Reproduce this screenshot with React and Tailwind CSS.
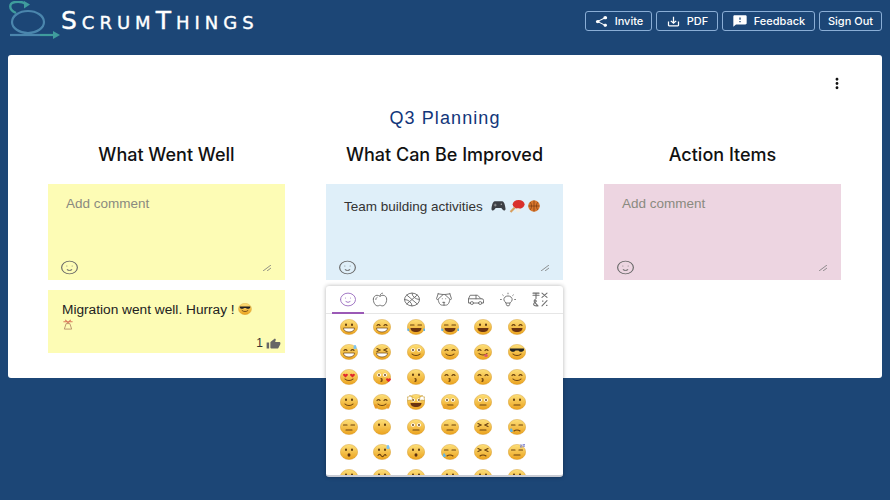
import React from 'react';
import { MdShare, MdSaveAlt, MdFeedback, MdMoreVert, MdThumbUp } from 'react-icons/md';
import { TbMoodSmile, TbApple, TbBallBasketball, TbDog, TbCar, TbBulb } from 'react-icons/tb';

const FONT = "font-['Liberation_Sans',Arial,sans-serif]";

const HEADER_BUTTONS = [
  { label: 'Invite', icon: <MdShare className="w-[15px] h-[13px]" preserveAspectRatio="none" />, width: 'w-[67px]' },
  { label: 'PDF', icon: <MdSaveAlt className="w-[15px] h-[13px]" preserveAspectRatio="none" />, width: 'w-[62px]' },
  { label: 'Feedback', icon: <MdFeedback className="w-[16px] h-[14px]" preserveAspectRatio="none" />, width: 'w-[93px]' },
  { label: 'Sign Out', icon: null, width: 'w-[63px]' },
];

function Symbols(props) {
  return (
    <svg viewBox="0 0 20 16" fill="none" stroke="currentColor" {...props}>
      <path d="M3 2h6M6 2v5M3 4h6M12 2l5 4M17 2l-5 4M7 14c-3 0-4-1-3-2.500s3-1 2-2.500-3 0-1 2l3 3M12 14l5-5M12.500 9.500h.5M16.500 13.500h.5" strokeWidth="1.100" strokeLinecap="round" />
    </svg>
  );
}

const TABS = [TbMoodSmile, TbApple, TbBallBasketball, TbDog, TbCar, TbBulb, Symbols];

// eyes: d dot, s smile arc, h heart, c closed line, g shades, w wide, x squint
// mouth: g grin, s smile, o small o, f flat, k kiss, t tongue, w wavy, d frown, b big open
const EMOJIS = [
  ['d', 'g'], ['s', 'g'], ['c', 'b', 'tears'], ['c', 'b', 'tears'], ['d', 'b'], ['s', 'b'],
  ['s', 'g', 'sweat'], ['x', 'g'], ['w', 's'], ['s', 's'], ['s', 't'], ['g', 's'],
  ['h', 's'], ['w', 'k', 'heart'], ['d', 'k'], ['s', 'k'], ['s', 'k'], ['s', 's'],
  ['d', 's'], ['s', 's', 'hands'], ['w', 'b', 'star'], ['w', 'f', 'hand'], ['w', 'f'], ['d', 'f'],
  ['c', 'f'], ['d', 'none'], ['w', 'f'], ['c', 'f'], ['x', 'f'], ['c', 'd', 'tear'],
  ['d', 'o'], ['d', 'w', 'sweat'], ['d', 'o'], ['c', 'd', 'tear'], ['x', 'd'], ['c', 'f', 'zzz'],
];

function Eyes({ kind }) {
  const line = { fill: 'none', stroke: '#6b4210', strokeWidth: 1.2, strokeLinecap: 'round' };
  if (kind === 'h') {
    return <path d="M3 5.5c.6-1 2-1 2.5 0 .5-1 2-1 2.4 0 .3 1-1.400 2.200-2.400 3-1-.8-2.800-2-2.500-3zM10 5.500c.6-1 2-1 2.500 0 .5-1 2-1 2.400 0 .3 1-1.400 2.200-2.400 3-1-.8-2.800-2-2.500-3z" fill="#e0282e" />;
  }
  if (kind === 'g') {
    return <path d="M2 4.500h14v1.500c-.5 2-4.500 2.500-5.500.5h-3c-1 2-5 1.500-5.500-.5z" fill="#222" />;
  }
  if (kind === 's') return <path d="M4 6.500c.8-1.300 2.400-1.300 3 0M11 6.500c.8-1.300 2.400-1.300 3 0" {...line} />;
  if (kind === 'c') return <path d="M3.500 6h3.500M11 6h3.500" {...line} />;
  if (kind === 'x') return <path d="M4 4.500l3 1.500-3 1.500M14 4.500l-3 1.500 3 1.500" {...line} />;
  if (kind === 'w') {
    return (
      <>
        <ellipse cx="6" cy="6" rx="2" ry="1.700" fill="#fff" />
        <ellipse cx="12" cy="6" rx="2" ry="1.700" fill="#fff" />
        <circle cx="6" cy="6" r=".9" fill="#5b3810" />
        <circle cx="12" cy="6" r=".9" fill="#5b3810" />
      </>
    );
  }
  return (
    <>
      <ellipse cx="6" cy="5.800" rx="1" ry="1.300" fill="#5b3810" />
      <ellipse cx="12" cy="5.800" rx="1" ry="1.300" fill="#5b3810" />
    </>
  );
}

function Mouth({ kind }) {
  const line = { fill: 'none', stroke: '#6b4210', strokeWidth: 1.1, strokeLinecap: 'round' };
  if (kind === 'g') return <path d="M3.500 9h11c0 2.600-2.400 4-5.500 4s-5.500-1.400-5.500-4z" fill="#fff" stroke="#6b4210" strokeWidth=".7" />;
  if (kind === 'b') return <path d="M3.500 9h11c0 2.600-2.400 4-5.500 4s-5.500-1.400-5.500-4z" fill="#6b3410" />;
  if (kind === 's') return <path d="M5 10c1.800 2 6.200 2 8 0" {...line} />;
  if (kind === 'f') return <path d="M6 11h6" {...line} />;
  if (kind === 'o') return <ellipse cx="9" cy="11" rx="1.500" ry="1.700" fill="#5b3010" />;
  if (kind === 'k') return <path d="M8 9.500c1.500.5 1.500 1 .5 1.500 1 .5 1 1-.5 1.500" {...line} />;
  if (kind === 't') return <><path d="M5 9.500c1.800 2 6.200 2 8 0" {...line} /><ellipse cx="12" cy="11.500" rx="1.800" ry="1.500" fill="#e05a6a" /></>;
  if (kind === 'w') return <path d="M5 11.500c1-1.500 2-1.500 3 0s2 1.500 3 0 1.500-1 2 0" {...line} />;
  if (kind === 'd') return <path d="M6 12c1.500-1.300 4.500-1.300 6 0" {...line} />;
  return null;
}

function Extra({ kind }) {
  if (kind === 'tears') return <path d="M1 9c-1 1.500-1 3 .5 3S2.500 10.500 1 9zM17 9c-1 1.500-1 3 .5 3s1-1.500-.5-3z" fill="#5fb4ea" />;
  if (kind === 'sweat') return <path d="M14.500 1c-1.500 2-1.500 4 .5 4s2-2 .5-4z" fill="#7cc3ef" />;
  if (kind === 'tear') return <path d="M3 9c-1.500 2-1.500 4 .5 4s1.500-2-.5-4z" fill="#5fb4ea" />;
  if (kind === 'heart') return <path d="M13 10c.6-1 2-1 2.500 0 .5-1 2-1 2.400 0 .3 1-1.400 2.200-2.400 3-1-.8-2.800-2-2.500-3z" fill="#e0282e" />;
  if (kind === 'hands') return <path d="M1 11c1-1 3-1 4 1l-1 2.500H2zM17 11c-1-1-3-1-4 1l1 2.500h2z" fill="#e89a28" />;
  if (kind === 'star') return <path d="M3 1l1 2h2l-1 2 1 2-3-1-3 1 1-2-1-2h2zM15 1l1 2h2l-1 2 1 2-3-1-3 1 1-2-1-2h2z" fill="#fff" stroke="#b8860b" strokeWidth=".5" />;
  if (kind === 'hand') return <path d="M2 11c1-1 4-1 5 1s-1 3-3 3-3-2-2-4z" fill="#eaa52d" />;
  if (kind === 'zzz') return <path d="M12 1h2.500l-2.500 2h2.500M15 .5h2l-2 1.800h2" fill="none" stroke="#7a7fd0" strokeWidth=".8" />;
  return null;
}

function Emoji({ eyes, mouth, extra, className = 'w-[18px] h-[16px]' }) {
  return (
    <svg viewBox="0 0 18 16" className={className} aria-hidden="true">
      <defs>
        <linearGradient id="face" x1="0" y1="0" x2="0" y2="1">
          <stop offset="0" stopColor="#fde07a" />
          <stop offset="1" stopColor="#eba21e" />
        </linearGradient>
      </defs>
      <ellipse cx="9" cy="8" rx="8.700" ry="7.600" fill="url(#face)" stroke="#d08f1c" strokeWidth=".4" />
      <Eyes kind={eyes} />
      <Mouth kind={mouth} />
      <Extra kind={extra} />
    </svg>
  );
}

function Logo() {
  return (
    <svg viewBox="0 0 52 38" className="w-[52px] h-[38px] shrink-0" fill="none" aria-hidden="true">
      <path d="M7 12C-1 8 0 2 6 1c4-.6 8 0 11 2" stroke="#3f9c9d" strokeWidth="2.400" />
      <path d="M15 0l6 3.500-6 4z" fill="#3f9c9d" />
      <ellipse cx="19" cy="21" rx="16" ry="11" stroke="#4b86ad" strokeWidth="2.200" />
      <path d="M1 34h30" stroke="#4b86ad" strokeWidth="2.200" />
      <path d="M31 34h13" stroke="#3f9c9d" strokeWidth="2.200" />
      <path d="M44 30l7 4-7 4z" fill="#3f9c9d" />
    </svg>
  );
}

function HeaderButton({ label, icon, width }) {
  return (
    <button
      type="button"
      className={`${width} h-[20px] flex items-center justify-center gap-[6px] rounded-[3px] border border-[#8aaed6] text-white text-[11px] font-medium font-['Inter',sans-serif]`}
    >
      {icon}
      <span>{label}</span>
    </button>
  );
}

function Smiley() {
  return <TbMoodSmile className="w-[21px] h-[17px] ml-[-2px] text-[#666]" preserveAspectRatio="none" strokeWidth={1.3} />;
}

function ResizeHandle() {
  return (
    <svg viewBox="0 0 8 6" className="w-[8px] h-[6px]" fill="none" stroke="#777" strokeWidth=".8" aria-hidden="true">
      <path d="M0 6l8-6M4 6l4-3" />
    </svg>
  );
}

function Note({ color, placeholder, children }) {
  return (
    <div className={`${color} h-[96px] flex flex-col px-[13px] pb-[4px] pt-[11px]`}>
      <div className="flex-1 px-[5px] text-[13.5px] leading-[18px]">
        {placeholder ? <span className="text-[#8a8a80]">{placeholder}</span> : <span className="block pt-[3px] text-[#333]">{children}</span>}
      </div>
      <div className="flex items-center justify-between pr-[1px]">
        <Smiley />
        <ResizeHandle />
      </div>
    </div>
  );
}

function Gamepad() {
  return (
    <svg viewBox="0 0 16 12" className="inline-block w-[15px] h-[12px] align-[-1px] ml-[4px]" aria-hidden="true">
      <path d="M4 1h8c2 0 3 4 3.500 8 .2 2-2 2.500-3 1L11 8H5l-1.500 2c-1 1.500-3.200 1-3-1C1 5 2 1 4 1z" fill="#3d3f44" />
      <path d="M3 5h3M4.500 3.500v3" stroke="#aaa" strokeWidth=".8" />
      <circle cx="11" cy="4" r=".8" fill="#aaa" />
    </svg>
  );
}

function Paddle() {
  return (
    <svg viewBox="0 0 14 12" className="inline-block w-[16px] h-[13px] align-[-2px]" aria-hidden="true">
      <ellipse cx="8.500" cy="4" rx="5.500" ry="4" fill="#d9302c" />
      <path d="M5 7L1 11" stroke="#d8a060" strokeWidth="2" />
      <circle cx="8" cy="9.500" r="2" fill="#f1ede2" />
    </svg>
  );
}

function Basketball() {
  return (
    <svg viewBox="0 0 12 12" className="inline-block w-[14px] h-[12px] align-[-1px] ml-[-2px]" fill="none" aria-hidden="true">
      <circle cx="6" cy="6" r="5.800" fill="#d9762c" />
      <path d="M.5 6h11M6 .5v11M2 2c2 2 2 6 0 8M10 2c-2 2-2 6 0 8" stroke="#7a3b10" strokeWidth=".7" />
    </svg>
  );
}

function Shades() {
  return <Emoji eyes="g" mouth="s" className="inline-block w-[14px] h-[12px] align-[-1px]" />;
}

function Confetti() {
  return (
    <svg viewBox="0 0 12 12" className="w-[12px] h-[11px] mt-[1px]" fill="none" aria-hidden="true">
      <path d="M2 11l2-6h4l2 6z" stroke="#b8906a" strokeWidth="1" />
      <path d="M1 3l10 0M3 1l3 3 3-3" stroke="#d9795a" strokeWidth="1.100" />
    </svg>
  );
}

function EmojiPicker() {
  return (
    <div className="absolute left-0 right-0 top-[calc(100%+6px)] z-10 h-[191px] overflow-hidden rounded-[3px] bg-white border-b-2 border-[#c9ccd4] shadow-[0_0_4px_rgba(0,0,0,0.3)]">
      <div className="h-[28px] flex items-center pl-[6px] border-b border-[#e6e6e6]">
        {TABS.map((Icon, i) => (
          <div key={i} className={`relative w-[32px] h-full flex items-center justify-center ${i === 0 ? 'text-[#9b6fc0]' : 'text-[#6d6d6d]'}`}>
            <Icon className="w-[20px] h-[17px]" preserveAspectRatio="none" strokeWidth={1.2} />
            {i === 0 && <span className="absolute left-0 right-0 bottom-[-1px] h-[2px] bg-[#9b59b6]" />}
          </div>
        ))}
      </div>
      <div className="grid grid-cols-6 gap-y-[9px] pl-[6px] pr-[29px] pt-[5px] justify-items-center">
        {EMOJIS.map(([eyes, mouth, extra], i) => (
          <Emoji key={i} eyes={eyes} mouth={mouth} extra={extra} />
        ))}
        {[0, 1, 2, 3, 4, 5].map((i) => (
          <Emoji key={`last-${i}`} eyes="d" mouth="s" />
        ))}
      </div>
    </div>
  );
}

function Heading({ children }) {
  return <h2 className="h-[39px] text-center text-[18px] font-medium font-['Inter',sans-serif] text-[#111] leading-[20px]">{children}</h2>;
}

export default function App() {
  return (
    <div className={`min-h-screen bg-[#1c4676] ${FONT}`}>
      <header className="h-[55px] flex items-start justify-between pl-[9px] pr-[8px]">
        <div className="flex items-start pt-[1px]">
          <Logo />
          <span className="mt-[7px] text-[25px] leading-[26px] text-white tracking-[5px] font-['DejaVu_Sans',sans-serif] [-webkit-text-stroke:0.4px_white] [font-variant:small-caps]">ScrumThings</span>
        </div>
        <div className="flex gap-[4px] pt-[11px]">
          {HEADER_BUTTONS.map((b) => (
            <HeaderButton key={b.label} {...b} />
          ))}
        </div>
      </header>

      <main className="mx-[8px] h-[323px] rounded-[3px] bg-white pl-[40px]">
        <div className="flex justify-end h-[51px] pt-[20px] pr-[36px]">
          <MdMoreVert className="w-[18px] h-[17px] text-[#111]" />
        </div>
        <h1 className="h-[36px] text-center text-[18px] leading-[24px] tracking-[1.100px] text-[#12367a] pr-[40px]">Q3 Planning</h1>
        <div className="grid grid-cols-[237px_237px_237px] gap-x-[41px] pt-[3px]">
          <div>
            <Heading>What Went Well</Heading>
            <Note color="bg-[#fdfcb5]" placeholder="Add comment" />
            <div className="mt-[10px] h-[63px] bg-[#fdfcb5] flex flex-col px-[14px] pt-[11px] pb-[3px]">
              <div className="text-[13.7px] leading-[17px] text-[#222]">
                Migration went well. Hurray ! <Shades />
              </div>
              <Confetti />
              <div className="mt-auto flex items-center justify-end gap-[3px] mr-[-10px] text-[12px] leading-[13px] text-[#333]">
                <span>1</span>
                <MdThumbUp className="w-[15px] h-[12px] text-[#666]" preserveAspectRatio="none" />
              </div>
            </div>
          </div>
          <div>
            <Heading>What Can Be Improved</Heading>
            <div className="relative">
              <Note color="bg-[#dfeff9]">
                Team building activities <Gamepad /> <Paddle /> <Basketball />
              </Note>
              <EmojiPicker />
            </div>
          </div>
          <div>
            <Heading>Action Items</Heading>
            <Note color="bg-[#edd5e1]" placeholder="Add comment" />
          </div>
        </div>
      </main>
    </div>
  );
}
